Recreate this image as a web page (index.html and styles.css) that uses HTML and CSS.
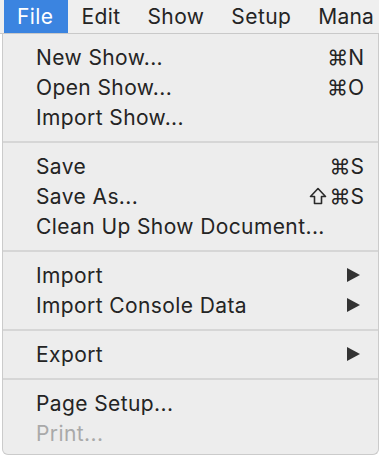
FILE: index.html
```html
<!DOCTYPE html>
<html lang="en">
  <head>
    <meta charset="UTF-8" />
    <title>File menu</title>
    <link rel="stylesheet" href="styles.css">
  </head>
  <body>
    <div class="menubar">
      <span class="menubar-item active">File</span>
      <span class="menubar-item">Edit</span>
      <span class="menubar-item">Show</span>
      <span class="menubar-item">Setup</span>
      <span class="menubar-item last">Mana</span>
    </div>
    <div class="menu">
      <div class="menu-item"><span>New Show...</span><span class="shortcut">⌘N</span></div>
      <div class="menu-item"><span>Open Show...</span><span class="shortcut">⌘O</span></div>
      <div class="menu-item"><span>Import Show...</span></div>
      <div class="separator"></div>
      <div class="menu-item"><span>Save</span><span class="shortcut">⌘S</span></div>
      <div class="menu-item">
        <span>Save As...</span>
        <span class="shortcut">
          <svg class="shift-icon" width="18" height="18" viewBox="0 0 18 18">
            <path d="M9 1.5 L16.5 9.5 L12.5 9.5 L12.5 16.5 L5.5 16.5 L5.5 9.5 L1.5 9.5 Z" fill="none" stroke="#2a2a2a" stroke-width="1.6" stroke-linejoin="round" />
          </svg>⌘S
        </span>
      </div>
      <div class="menu-item"><span>Clean Up Show Document...</span></div>
      <div class="separator"></div>
      <div class="menu-item"><span>Import</span><span class="submenu-arrow"></span></div>
      <div class="menu-item"><span>Import Console Data</span><span class="submenu-arrow"></span></div>
      <div class="separator"></div>
      <div class="menu-item"><span>Export</span><span class="submenu-arrow"></span></div>
      <div class="separator"></div>
      <div class="menu-item"><span>Page Setup...</span></div>
      <div class="menu-item disabled"><span>Print...</span></div>
    </div>
  </body>
</html>
```

FILE: styles.css
```css
body {
  margin: 0;
  background-color: #ffffff;
  font-family: Inter, "Liberation Sans", "DejaVu Sans", sans-serif;
  font-size: 21px;
  letter-spacing: 0.4px;
  color: #242424;
  overflow: hidden;
}

.menubar {
  display: flex;
  height: 33px;
  padding-left: 4px;
  background-color: #efefef;
  border-bottom: 1px solid #c9c9c9;
  white-space: nowrap;
  overflow: hidden;
}

.menubar-item {
  display: flex;
  align-items: center;
  padding: 0 14px 0 13px;
}

.menubar-item.last {
  padding-right: 0;
  letter-spacing: 0.2px;
}

.menubar-item.active {
  padding-right: 15px;
  background-color: #3b84e0;
  color: #ffffff;
}

.menu {
  margin-left: 2px;
  padding: 8px 0 6px;
  background-color: #ededed;
  border: 1px solid #cbcbcb;
  border-top: none;
  border-radius: 0 0 6px 6px;
}

.menu-item {
  display: flex;
  align-items: center;
  justify-content: space-between;
  height: 30px;
  padding: 0 14px 0 33px;
}

.menu-item.disabled {
  color: #a9a9a9;
}

.shortcut {
  display: flex;
  align-items: center;
  letter-spacing: 0;
}

.shift-icon {
  margin-right: 3px;
}

.submenu-arrow {
  width: 0;
  height: 0;
  margin-right: 4px;
  border-left: 13px solid #333333;
  border-top: 7px solid transparent;
  border-bottom: 7px solid transparent;
}

.separator {
  height: 2px;
  margin: 9px 0 8px;
  background-color: #d6d6d6;
}
```
